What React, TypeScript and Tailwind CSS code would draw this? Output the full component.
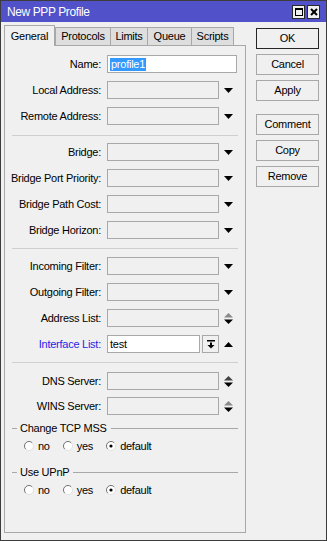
import React from 'react';

const DropArrow = () => (
  <svg width="9" height="5" viewBox="0 0 9 5">
    <polygon points="0,0 9,0 4.5,5" fill="#000" />
  </svg>
);

const UpArrow = () => (
  <svg width="9" height="5" viewBox="0 0 9 5">
    <polygon points="0,5 9,5 4.5,0" fill="#000" />
  </svg>
);

const SpinArrows = ({ top = '#8a8a8a' }: { top?: string }) => (
  <svg width="9" height="11" viewBox="0 0 9 11">
    <polygon points="0,4.5 9,4.5 4.5,0" fill={top} />
    <polygon points="0,6.5 9,6.5 4.5,11" fill="#000" />
  </svg>
);

const Radio = ({ checked }: { checked?: boolean }) => (
  <svg width="10" height="10" viewBox="0 0 10 10">
    <circle cx="5" cy="5" r="4.5" fill="#fff" />
    <path d="M1.8 8.2 A4.5 4.5 0 0 1 8.2 1.8" stroke="#707070" strokeWidth="1" fill="none" />
    <path d="M8.2 1.8 A4.5 4.5 0 0 1 1.8 8.2" stroke="#e0e0e0" strokeWidth="1" fill="none" />
    {checked && <circle cx="5" cy="5" r="1.6" fill="#000" />}
  </svg>
);

interface RowProps {
  label: string;
  blue?: boolean;
  kind?: 'plain' | 'drop' | 'spin' | 'spinDark' | 'iface';
  value?: string;
}

const Row: React.FC<RowProps> = ({ label, blue, kind = 'drop', value }) => (
  <div className="flex items-center h-[18px]">
    <div className={`w-[96px] text-right leading-none ${blue ? 'text-[#1f1fe6]' : 'text-black'}`}>{label}</div>
    {kind === 'plain' && (
      <div className="ml-[6px] w-[130px] h-[18px] bg-white border border-[#a8a8a8] flex items-center px-[2px]">
        <span className="bg-[#3399ff] text-white leading-[13px] px-px">{value}</span>
      </div>
    )}
    {kind === 'iface' && (
      <>
        <div className="ml-[6px] w-[93px] h-[18px] bg-white border border-[#a8a8a8] flex items-center px-[2px] leading-none">
          {value}
        </div>
        <div className="ml-[2px] w-[17px] h-[18px] border border-[#a8a8a8] flex items-center justify-center">
          <svg width="8" height="9" viewBox="0 0 8 9">
            <rect x="0" y="0" width="8" height="1.5" fill="#000" />
            <rect x="3" y="2.5" width="2" height="3" fill="#000" />
            <polygon points="0.5,5 7.5,5 4,8.5" fill="#000" />
          </svg>
        </div>
        <div className="w-[18px] flex justify-center">
          <UpArrow />
        </div>
      </>
    )}
    {(kind === 'drop' || kind === 'spin' || kind === 'spinDark') && (
      <>
        <div className="ml-[6px] w-[112px] h-[18px] bg-[#f0f0f0] border border-[#a8a8a8]" />
        <div className="w-[18px] flex justify-center">
          {kind === 'drop' ? <DropArrow /> : <SpinArrows top={kind === 'spinDark' ? '#444' : '#8a8a8a'} />}
        </div>
      </>
    )}
  </div>
);

const Separator = ({ top, bottom }: { top: string; bottom: string }) => (
  <div className={`ml-[7px] mr-[7px] h-px bg-[#cfcfcf] ${top} ${bottom}`} />
);

const Group = ({ title, className }: { title: string; className: string }) => (
  <div className={className}>
    <div className="flex items-center h-[14px]">
      <div className="ml-[7px] w-[5px] h-px bg-[#a8a8a8]" />
      <div className="ml-[3px] leading-none">{title}</div>
      <div className="ml-[4px] mr-[7px] flex-1 h-px bg-[#a8a8a8]" />
    </div>
    <div className="flex items-center h-[14px] pl-[19px] mt-[4px]">
      <Radio />
      <span className="ml-[4px] leading-none">no</span>
      <span className="ml-[13px]"><Radio /></span>
      <span className="ml-[4px] leading-none">yes</span>
      <span className="ml-[13px]"><Radio checked /></span>
      <span className="ml-[4px] leading-none">default</span>
    </div>
  </div>
);

const tabs = ['General', 'Protocols', 'Limits', 'Queue', 'Scripts'];
const tabWidths = ['w-[51px]', 'w-[55px]', 'w-[37px]', 'w-[44px]', 'w-[43px]'];

const Btn = ({ label, focus, className = '' }: { label: string; focus?: boolean; className?: string }) => (
  <div
    className={`w-[63px] h-[21px] flex items-center justify-center border ${
      focus ? 'border-[#262626]' : 'border-[#a8a8a8]'
    } bg-[#f0f0f0] leading-none ${className}`}
  >
    {label}
  </div>
);

export default function App() {
  return (
    <div className="w-[327px] h-[541px] bg-[#f0f0f0] border border-[#3c3c3c] flex flex-col font-['Liberation_Sans',Arial,sans-serif] text-[11px] tracking-[-0.25px] text-black overflow-hidden">
      {/* title bar */}
      <div className="h-[21px] bg-[#5151c9] flex items-center pl-[6px] pr-[6px]">
        <span className="text-white text-[12px] leading-none tracking-[-0.4px]">New PPP Profile</span>
        <div className="ml-auto flex gap-[2px]">
          <div className="w-[13px] h-[14px] bg-[#f0f0f0] border border-[#2a2a2a] flex items-center justify-center">
            <svg width="8" height="8" viewBox="0 0 8 8">
              <rect x="0.5" y="0.5" width="7" height="7" fill="none" stroke="#000" />
              <rect x="0" y="0" width="8" height="2" fill="#000" />
            </svg>
          </div>
          <div className="w-[13px] h-[14px] bg-[#f0f0f0] border border-[#2a2a2a] flex items-center justify-center">
            <svg width="8" height="8" viewBox="0 0 8 8">
              <path d="M1 1 L7 7 M7 1 L1 7" stroke="#000" strokeWidth="2" />
            </svg>
          </div>
        </div>
      </div>

      <div className="flex flex-1">
        {/* left: tabs + panel */}
        <div className="ml-[3px] mt-[3px] w-[242px] flex flex-col">
          <div className="flex items-end h-[20px]">
            {tabs.map((t, i) => (
              <div
                key={t}
                className={`${tabWidths[i]} flex items-center justify-center border-t border-l border-[#a8a8a8] leading-none ${
                  i === 0
                    ? 'h-[21px] bg-[#f0f0f0] border-r relative z-10 mb-[-1px]'
                    : `h-[18px] bg-[#dedede] ${i === tabs.length - 1 ? 'border-r' : ''}`
                }`}
              >
                {t}
              </div>
            ))}
          </div>
          <div className="h-[488px] border border-[#a8a8a8] pt-[9px]">
            <div className="flex flex-col gap-[8px]">
              <Row label="Name:" kind="plain" value="profile1" />
              <Row label="Local Address:" />
              <Row label="Remote Address:" />
            </div>
            <Separator top="mt-[10px]" bottom="mb-[7px]" />
            <div className="flex flex-col gap-[8px]">
              <Row label="Bridge:" />
              <Row label="Bridge Port Priority:" />
              <Row label="Bridge Path Cost:" />
              <Row label="Bridge Horizon:" />
            </div>
            <Separator top="mt-[9px]" bottom="mb-[8px]" />
            <div className="flex flex-col gap-[8px]">
              <Row label="Incoming Filter:" />
              <Row label="Outgoing Filter:" />
              <Row label="Address List:" kind="spin" />
              <Row label="Interface List:" kind="iface" blue value="test" />
            </div>
            <Separator top="mt-[9px]" bottom="mb-[9px]" />
            <div className="flex flex-col gap-[7px]">
              <Row label="DNS Server:" kind="spinDark" />
              <Row label="WINS Server:" kind="spin" />
            </div>
            <Group title="Change TCP MSS" className="mt-[6px]" />
            <Group title="Use UPnP" className="mt-[12px]" />
          </div>
        </div>

        {/* right: buttons */}
        <div className="ml-[10px] mt-[6px] flex flex-col">
          <Btn label="OK" focus />
          <Btn label="Cancel" className="mt-[5px]" />
          <Btn label="Apply" className="mt-[5px]" />
          <Btn label="Comment" className="mt-[13px]" />
          <Btn label="Copy" className="mt-[5px]" />
          <Btn label="Remove" className="mt-[5px]" />
        </div>
      </div>
    </div>
  );
}
